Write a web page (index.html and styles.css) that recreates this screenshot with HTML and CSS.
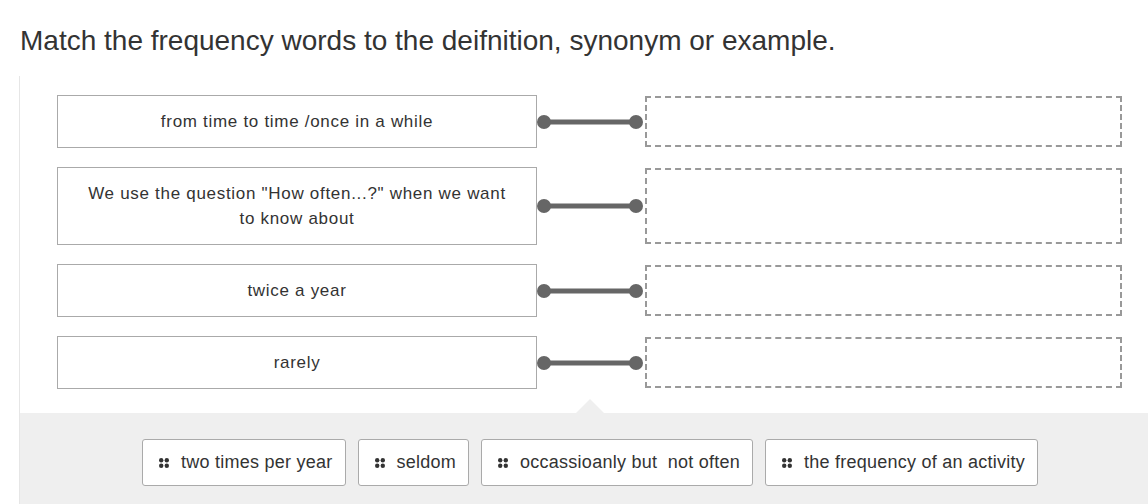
FILE: index.html
```html
<!DOCTYPE html>
<html lang="en">
<head>
<meta charset="utf-8">
<title>Match the frequency words</title>
<link rel="stylesheet" href="styles.css">
</head>
<body>
<h1 class="title">Match the frequency words to the deifnition, synonym or example.</h1>
<div class="task">
  <div class="pairs">
    <div class="pair">
      <div class="prompt">from time to time /once in a while</div>
      <div class="connector"><svg width="108" height="16" viewBox="0 0 108 16"><line x1="7" y1="8" x2="99" y2="8" stroke="#666" stroke-width="5"/><circle cx="7" cy="8" r="7" fill="#666"/><circle cx="99" cy="8" r="7" fill="#666"/></svg></div>
      <div class="drop"></div>
    </div>
    <div class="pair">
      <div class="prompt">We use the question "How often...?" when we want to know about</div>
      <div class="connector"><svg width="108" height="16" viewBox="0 0 108 16"><line x1="7" y1="8" x2="99" y2="8" stroke="#666" stroke-width="5"/><circle cx="7" cy="8" r="7" fill="#666"/><circle cx="99" cy="8" r="7" fill="#666"/></svg></div>
      <div class="drop"></div>
    </div>
    <div class="pair">
      <div class="prompt">twice a year</div>
      <div class="connector"><svg width="108" height="16" viewBox="0 0 108 16"><line x1="7" y1="8" x2="99" y2="8" stroke="#666" stroke-width="5"/><circle cx="7" cy="8" r="7" fill="#666"/><circle cx="99" cy="8" r="7" fill="#666"/></svg></div>
      <div class="drop"></div>
    </div>
    <div class="pair">
      <div class="prompt">rarely</div>
      <div class="connector"><svg width="108" height="16" viewBox="0 0 108 16"><line x1="7" y1="8" x2="99" y2="8" stroke="#666" stroke-width="5"/><circle cx="7" cy="8" r="7" fill="#666"/><circle cx="99" cy="8" r="7" fill="#666"/></svg></div>
      <div class="drop"></div>
    </div>
  </div>
  <div class="bank">
    <div class="chip"><svg class="grip" width="10" height="10" viewBox="0 0 10 10"><circle cx="2.2" cy="2.2" r="2.2"/><circle cx="7.8" cy="2.2" r="2.2"/><circle cx="2.2" cy="7.8" r="2.2"/><circle cx="7.8" cy="7.8" r="2.2"/></svg><span>two times per year</span></div>
    <div class="chip"><svg class="grip" width="10" height="10" viewBox="0 0 10 10"><circle cx="2.2" cy="2.2" r="2.2"/><circle cx="7.8" cy="2.2" r="2.2"/><circle cx="2.2" cy="7.8" r="2.2"/><circle cx="7.8" cy="7.8" r="2.2"/></svg><span>seldom</span></div>
    <div class="chip"><svg class="grip" width="10" height="10" viewBox="0 0 10 10"><circle cx="2.2" cy="2.2" r="2.2"/><circle cx="7.8" cy="2.2" r="2.2"/><circle cx="2.2" cy="7.8" r="2.2"/><circle cx="7.8" cy="7.8" r="2.2"/></svg><span>occassioanly but&nbsp; not often</span></div>
    <div class="chip"><svg class="grip" width="10" height="10" viewBox="0 0 10 10"><circle cx="2.2" cy="2.2" r="2.2"/><circle cx="7.8" cy="2.2" r="2.2"/><circle cx="2.2" cy="7.8" r="2.2"/><circle cx="7.8" cy="7.8" r="2.2"/></svg><span>the frequency of an activity</span></div>
  </div>
</div>
</body>
</html>
```
FILE: styles.css
```css
html, body {
  margin: 0;
  padding: 0;
  background: #fff;
  overflow: hidden;
}
body {
  font-family: "Liberation Sans", Arial, sans-serif;
  color: #333;
}
.title {
  margin: 0 0 18px;
  padding: 24px 20px 0;
  font-size: 28px;
  line-height: 34px;
  font-weight: normal;
  color: #333;
}
.task {
  margin-left: 19px;
  border-left: 1px solid #e6e6e6;
}
.pairs {
  display: flex;
  flex-direction: column;
  gap: 19px;
  padding: 19px 0 24px 37px;
}
.pair {
  display: flex;
  align-items: stretch;
}
.prompt {
  box-sizing: border-box;
  width: 480px;
  min-height: 53px;
  border: 1px solid #aaa;
  padding: 13px 26px;
  display: flex;
  align-items: center;
  justify-content: center;
  text-align: center;
  font-size: 17px;
  letter-spacing: 0.7px;
  line-height: 25px;
}
.connector {
  width: 108px;
  display: flex;
  align-items: center;
}
.connector svg {
  display: block;
}
.drop {
  box-sizing: border-box;
  width: 477px;
  margin: 1px 0;
  border: 2px dashed #999;
}
.bank {
  position: relative;
  background: #efefef;
  display: flex;
  gap: 12px;
  padding: 26px 0 30px 122px;
}
.bank::before {
  content: "";
  position: absolute;
  top: -14px;
  left: 556px;
  border-left: 14px solid transparent;
  border-right: 14px solid transparent;
  border-bottom: 14px solid #efefef;
}
.chip {
  box-sizing: border-box;
  height: 47px;
  display: flex;
  align-items: center;
  gap: 12px;
  padding: 0 12px 0 16px;
  background: #fff;
  border: 1px solid #aaa;
  border-radius: 3px;
  font-size: 18px;
  letter-spacing: 0.25px;
  color: #333;
}
.grip {
  display: block;
  fill: #333;
}
```
